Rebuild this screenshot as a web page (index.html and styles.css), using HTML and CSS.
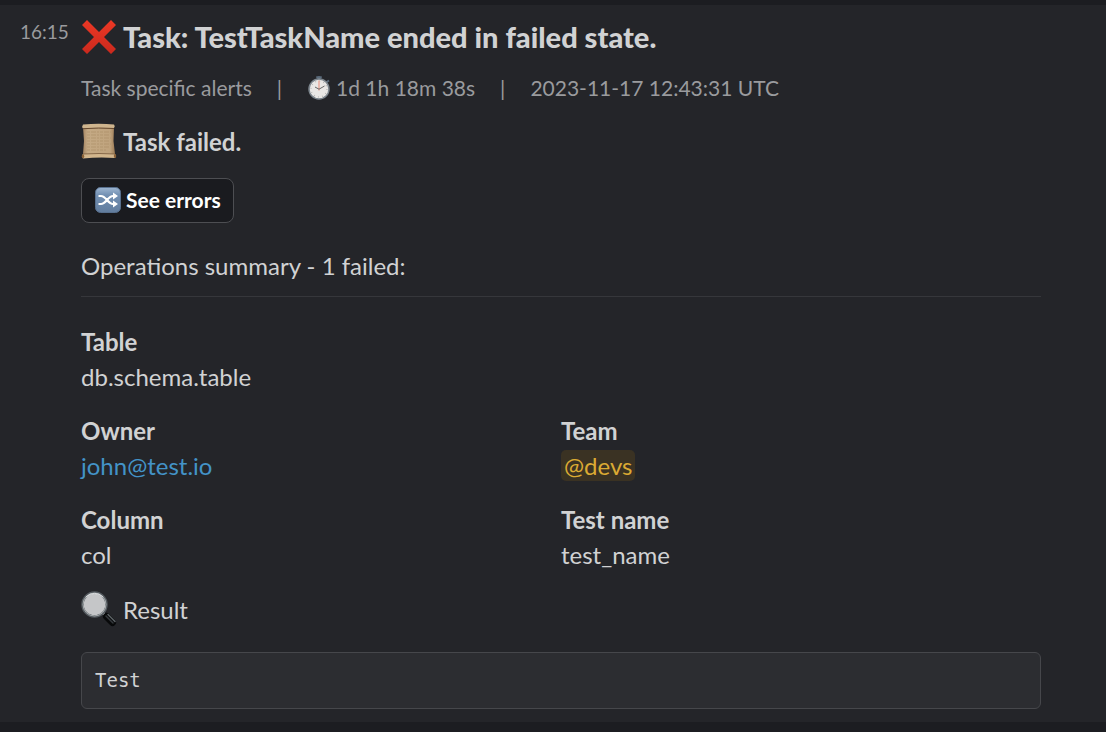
FILE: index.html
```html
<!DOCTYPE html>
<html lang="en">
    <head>
        <meta charset="utf-8">
        <title>Task alert</title>
        <link rel="stylesheet" href="styles.css">
    </head>
    <body>
        <article class="message">
            <time class="timestamp">16:15</time>
            <div class="content">
                <h1 class="title">
                    <svg class="emoji" viewBox="0 0 36 36" aria-hidden="true">
                        <defs>
                            <linearGradient id="crossFill" x1="0" y1="0" x2="0" y2="1">
                                <stop offset="0" stop-color="#ec3825"/>
                                <stop offset="1" stop-color="#ca291d"/>
                            </linearGradient>
                        </defs>
                        <path fill="url(#crossFill)" d="M6 1L18 13L30 1L35 6L23 18L35 30L30 35L18 23L6 35L1 30L13 18L1 6Z"/>
                    </svg>
                    Task: TestTaskName ended in failed state.
                </h1>

                <div class="meta">
                    <span>Task specific alerts</span>
                    <span>|</span>
                    <span class="duration">
                        <svg class="emoji-small" viewBox="0 0 24 24" aria-hidden="true">
                            <path fill="#5b6c7c" d="M9 .5Q12 -.5 15 .5L14.500 2.500H13.500V4H10.500V2.500H9.500Z"/>
                            <path stroke="#5b6c7c" stroke-width="2" d="M19 6.500L22 4.500"/>
                            <circle cx="12" cy="13" r="10" fill="#e9e7e5" stroke="#7c858d" stroke-width="1.500"/>
                            <circle cx="12" cy="13" r="8" fill="none" stroke="#b5b5b5" stroke-width="1.200" stroke-dasharray="1 3.189"/>
                            <path stroke="#e8ab9c" stroke-width="1.500" d="M12 4.500V14.500"/>
                            <path stroke="#666" stroke-width="1" fill="none" d="M8 11L12 13.200L17.500 10"/>
                        </svg>
                        1d 1h 18m 38s
                    </span>
                    <span>|</span>
                    <span>2023-11-17 12:43:31 UTC</span>
                </div>

                <p class="line status">
                    <svg class="emoji" viewBox="0 0 36 36" aria-hidden="true">
                        <defs>
                            <linearGradient id="paper" x1="0" y1="0" x2="1" y2="0">
                                <stop offset="0" stop-color="#a58663"/>
                                <stop offset=".15" stop-color="#c5aa85"/>
                                <stop offset=".85" stop-color="#bfa37d"/>
                                <stop offset="1" stop-color="#9c7a54"/>
                            </linearGradient>
                        </defs>
                        <path fill="url(#paper)" d="M2 4H33L32.500 18L34 31H2L3 18Z"/>
                        <path stroke="#ad9069" stroke-width=".7" stroke-dasharray="3 1 5 1 2 1" d="M6 9H30M6 12H29M6 15H30M6 18H28M6 21H30M6 24H29M6 27H25"/>
                        <path fill="#cfb58e" d="M2 1.500Q18 .2 33 1.500Q34.500 3 33 5Q18 4 2 5.500Q.5 3.500 2 1.500Z"/>
                        <path stroke="#66482d" stroke-width="1" fill="none" d="M2 5.700Q18 4.500 33 5.500"/>
                        <path fill="#d2b68d" d="M2 31Q18 30 34 31Q35.800 33 34 35Q18 33.800 2 35.500Q0 33 2 31Z"/>
                        <path stroke="#76583a" stroke-width=".8" fill="none" d="M2 31Q18 30 34 31"/>
                        <ellipse cx="2" cy="33.200" rx="1.200" ry="2" fill="#8b6238"/>
                        <ellipse cx="34" cy="33" rx="1.200" ry="2" fill="#8b6238"/>
                    </svg>
                    Task failed.
                </p>

                <button class="errors-button" type="button">
                    <svg class="emoji-button" viewBox="0 0 26 26" aria-hidden="true">
                        <defs>
                            <linearGradient id="tile" x1="0" y1="0" x2="0" y2="1">
                                <stop offset="0" stop-color="#9db6d1"/>
                                <stop offset=".3" stop-color="#7390b3"/>
                                <stop offset="1" stop-color="#627d9e"/>
                            </linearGradient>
                        </defs>
                        <rect x=".5" y=".5" width="25" height="25" rx="5" fill="url(#tile)" stroke="#58708e"/>
                        <path fill="none" stroke="#fff" stroke-width="2.200" d="M3.500 9H6C11 9 13 17 18 17H20M3.500 17H6C11 17 13 9 18 9H20"/>
                        <path fill="#fff" d="M18 5.500L23 9L18 12.500ZM18 13.500L23 17L18 20.500Z"/>
                    </svg>
                    See errors
                </button>

                <p class="line summary">Operations summary - 1 failed:</p>
                <hr class="divider">

                <dl class="fields">
                    <div class="field wide">
                        <dt>Table</dt>
                        <dd>db.schema.table</dd>
                    </div>
                    <div class="field">
                        <dt>Owner</dt>
                        <dd><a class="link" href="mailto:john@test.io">john@test.io</a></dd>
                    </div>
                    <div class="field">
                        <dt>Team</dt>
                        <dd><a class="mention" href="#">@devs</a></dd>
                    </div>
                    <div class="field">
                        <dt>Column</dt>
                        <dd>col</dd>
                    </div>
                    <div class="field">
                        <dt>Test name</dt>
                        <dd>test_name</dd>
                    </div>
                </dl>

                <p class="line result">
                    <svg class="emoji" viewBox="0 0 36 36" aria-hidden="true">
                        <path stroke="#9a9fa2" stroke-width="3" d="M21 21L25 25"/>
                        <path stroke="#08090a" stroke-width="7" stroke-linecap="round" d="M25.500 25.500L31.500 31.500"/>
                        <path stroke="#5d6367" stroke-width="1.500" stroke-linecap="round" d="M27 23.500L34 30.500"/>
                        <path stroke="#34393c" stroke-width="1.500" stroke-linecap="round" d="M25 25L32 32"/>
                        <circle cx="13.500" cy="13.500" r="12" fill="#c5c6c8" stroke="#555b60" stroke-width="2.500"/>
                        <circle cx="13.500" cy="13.500" r="11.500" fill="none" stroke="#a8adaf" stroke-width="1"/>
                        <path fill="none" stroke="#e3e5e6" stroke-width="1" d="M5 6A12 12 0 0 1 22 6"/>
                    </svg>
                    Result
                </p>

                <pre class="code"><code>Test</code></pre>
            </div>
        </article>
    </body>
</html>
```
FILE: styles.css
```css
* {
    box-sizing: border-box;
}

body {
    margin: 0;
    padding: 5px 0 10px;
    background: #1c1d21;
    color: #d1d2d3;
    font-family: Lato, sans-serif;
    font-size: 24px;
    line-height: 35px;
}

.message {
    display: flex;
    padding: 13px 65px 13px 20px;
    background: #242529;
}

.timestamp {
    flex: 0 0 61px;
    color: #9a9b9e;
    font-size: 19px;
    line-height: 28px;
}

.content {
    flex: 1;
    min-width: 0;
}

.title,
.line {
    display: flex;
    align-items: center;
    gap: 6px;
    margin: 0;
}

.title {
    font-size: 29px;
    font-weight: 900;
    line-height: 38px;
}

.emoji {
    flex: none;
    width: 36px;
    height: 36px;
}

.meta {
    display: flex;
    flex-wrap: wrap;
    gap: 25px;
    margin-top: 18px;
    color: #9a9b9e;
    font-size: 21px;
    line-height: 28px;
}

.duration {
    display: flex;
    align-items: center;
    gap: 5px;
}

.emoji-small {
    width: 24px;
    height: 24px;
}

.status {
    margin-top: 21px;
    font-weight: 700;
}

.errors-button {
    display: flex;
    align-items: center;
    gap: 5px;
    height: 45px;
    margin-top: 19px;
    padding: 0 12px 2px 13px;
    border: 1px solid #4d4e52;
    border-radius: 8px;
    background: #1a1b1f;
    color: #fff;
    font-family: inherit;
    font-size: 21px;
    font-weight: 700;
    cursor: pointer;
}

.emoji-button {
    width: 26px;
    height: 26px;
}

.summary {
    margin-top: 25px;
}

.divider {
    height: 1px;
    margin: 13px 0 27px;
    border: 0;
    background: #36373b;
}

.fields {
    display: grid;
    grid-template-columns: 1fr 1fr;
    row-gap: 19px;
    margin: 0;
}

.wide {
    grid-column: 1 / -1;
}

.field dt {
    font-weight: 700;
}

.field dd {
    margin: 0;
}

.link {
    color: #4393c7;
    text-decoration: none;
}

.link:hover {
    text-decoration: underline;
}

.mention {
    padding: 1px 3px;
    border-radius: 5px;
    background: #3a3223;
    color: #dbaa33;
    text-decoration: none;
}

.result {
    margin-top: 19px;
}

.code {
    margin: 25px 0 0;
    padding: 13px;
    border: 1px solid #46474b;
    border-radius: 6px;
    background: #2c2d31;
    font-size: 19px;
    line-height: 29px;
}

.code code {
    font-family: "DejaVu Sans Mono", monospace;
    font-size: 19px;
}
```
